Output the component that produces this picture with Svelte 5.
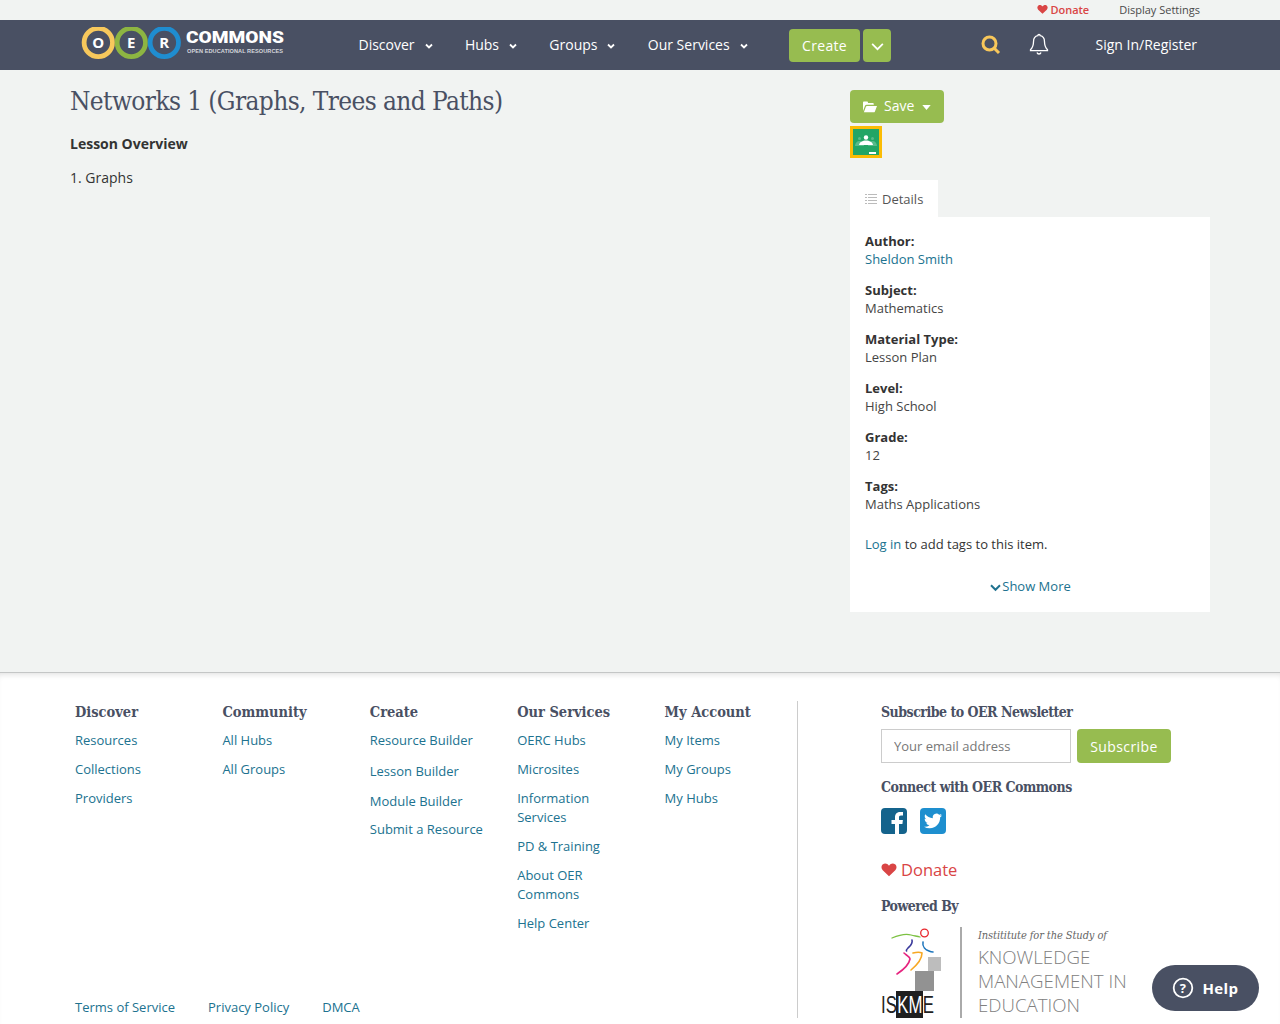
<script>
  const navItems = ['Discover', 'Hubs', 'Groups', 'Our Services'];
  const details = [
    ['Author:', 'Sheldon Smith', true],
    ['Subject:', 'Mathematics', false],
    ['Material Type:', 'Lesson Plan', false],
    ['Level:', 'High School', false],
    ['Grade:', '12', false],
    ['Tags:', 'Maths Applications', false]
  ];
  const columns = [
    { title: 'Discover', links: ['Resources', 'Collections', 'Providers'] },
    { title: 'Community', links: ['All Hubs', 'All Groups'] },
    { title: 'Create', cls: 'create', links: ['Resource Builder', 'Lesson Builder', 'Module Builder', 'Submit a Resource'] },
    { title: 'Our Services', links: ['OERC Hubs', 'Microsites', 'Information Services', 'PD & Training', 'About OER Commons', 'Help Center'] },
    { title: 'My Account', links: ['My Items', 'My Groups', 'My Hubs'] }
  ];
  const heart = 'M12 21.5 2.6 12.3C-.2 9.4.3 5.1 3 3.2c2.900-2 6.800-1 9 2.300 2.200-3.300 6.100-4.300 9-2.300 2.700 1.900 3.200 6.200.4 9.100z';
</script>

<div class="page">
  <div class="topbar">
    <a class="top-donate" href="#d">
      <svg class="heart-s" viewBox="0 0 24 24"><path d={heart} /></svg>Donate
    </a>
    <a class="top-settings" href="#s">Display Settings</a>
  </div>

  <nav class="nav">
    <svg class="logo" viewBox="0 0 210 36" aria-label="OER Commons">
      <g fill="none" stroke-width="4.800">
        <circle cx="17.300" cy="15.500" r="14.200" stroke="#f7c85c" />
        <circle cx="50.300" cy="15.500" r="14.200" stroke="#8db542" />
        <circle cx="83.300" cy="15.500" r="14.200" stroke="#1f8dd0" />
      </g>
      <g class="logo-letter" text-anchor="middle">
        <text x="17.300" y="20.800">O</text>
        <text x="50.300" y="20.800">E</text>
        <text x="83.300" y="20.800">R</text>
      </g>
      <text class="logo-name" x="105" y="15.700" textLength="98" lengthAdjust="spacingAndGlyphs">COMMONS</text>
      <text class="logo-sub" x="106" y="26" textLength="96">OPEN EDUCATIONAL RESOURCES</text>
    </svg>

    <ul class="menu">
      {#each navItems as item}
        <li>
          {item}
          <svg class="caret" viewBox="0 0 10 10"><path d="M2 3.500 5 6.500 8 3.500" /></svg>
        </li>
      {/each}
    </ul>

    <div class="create-group">
      <button class="btn create-btn">Create</button>
      <button class="btn chev-btn" aria-label="More">
        <svg viewBox="0 0 14 14"><path d="M2 4.500 7 9.500 12 4.500" /></svg>
      </button>
    </div>

    <svg class="search" viewBox="0 0 20 20"><circle cx="8.500" cy="8.500" r="6.500" /><path d="M13.500 13.500 18 18" /></svg>
    <svg class="bell" viewBox="0 0 20 22">
      <path d="M10 1.500c.8 0 1.200.5 1.200 1.200 3 .6 4.300 3 4.300 6 0 4 1 6 3 8v1H1.500v-1c2-2 3-4 3-8 0-3 1.300-5.400 4.300-6C8.800 2 9.200 1.500 10 1.500Z" />
      <path d="M8 19.500c.3 1 1 1.500 2 1.500s1.700-.5 2-1.500" />
    </svg>
    <a class="signin" href="#r">Sign In/Register</a>
  </nav>

  <main class="main">
    <article class="content">
      <h1>Networks 1 (Graphs, Trees and Paths)</h1>
      <p class="overview">Lesson Overview</p>
      <p class="body-text">1. Graphs</p>
    </article>

    <aside class="side">
      <button class="btn save">
        <svg class="folder" viewBox="0 0 16 13"><path d="M0 11V1.500C0 .8.500.3 1.200.3h3.300c.7 0 1.200.5 1.200 1.200v.3h5.500c.7 0 1.100.4 1.100 1.100v1H4.200C3.300 4 2.700 4.400 2.300 5.100Z" /><path d="M1 12.500 3.300 6.200c.2-.5.600-.8 1.200-.8H16l-2.500 6.400c-.2.500-.6.700-1.100.7Z" /></svg>
        <span>Save</span>
        <svg class="save-caret" viewBox="0 0 10 6"><path d="M0 0h10L5 6Z" /></svg>
      </button>
      <div class="classroom">
        <svg viewBox="0 0 26 26">
          <rect width="26" height="26" fill="#22a565" />
          <circle cx="6.500" cy="9.500" r="1.500" fill="#57bb8a" />
          <circle cx="19.500" cy="9.500" r="1.500" fill="#57bb8a" />
          <path d="M2 17c0-3 2-5 4.500-5S11 14 11 17ZM15 17c0-3 2-5 4.500-5S24 14 24 17Z" fill="#57bb8a" />
          <circle cx="13" cy="8.500" r="2.200" fill="#fff" />
          <path d="M6 16c.5-3 3.500-4.500 7-4.500S19.500 13 20 16Z" fill="#fff" />
          <rect x="16" y="23" width="7" height="2" fill="#fff" />
        </svg>
      </div>

      <div class="tab">
        <svg class="list" viewBox="0 0 12 10"><path d="M0 .5h2M3 .5h9M0 3.500h2M3 3.500h9M0 6.500h2M3 6.500h9M0 9.500h2M3 9.500h9" /></svg>
        Details
      </div>
      <div class="panel">
        {#each details as [label, value, isLink]}
          <div class="detail">
            <strong>{label}</strong>
            {#if isLink}<a href="#a">{value}</a>{:else}<span>{value}</span>{/if}
          </div>
        {/each}
        <p class="login"><a href="#l">Log in</a> to add tags to this item.</p>
        <a class="more" href="#m">
          <svg viewBox="0 0 14 10"><path d="M2 2.500 7 7.500 12 2.500" /></svg>Show More
        </a>
      </div>
    </aside>
  </main>

  <footer class="footer">
    <div class="foot-left">
      <div class="cols">
        {#each columns as col}
          <div class="col {col.cls ?? ''}">
            <h4>{col.title}</h4>
            {#each col.links as link}
              <a href="#f">{link}</a>
            {/each}
          </div>
        {/each}
      </div>
      <div class="legal">
        <a href="#t">Terms of Service</a>
        <a href="#p">Privacy Policy</a>
        <a href="#c">DMCA</a>
      </div>
    </div>

    <div class="foot-right">
      <h4>Subscribe to OER Newsletter</h4>
      <div class="subscribe">
        <input placeholder="Your email address" />
        <button class="btn sub-btn">Subscribe</button>
      </div>
      <h4>Connect with OER Commons</h4>
      <div class="social">
        <svg viewBox="0 0 26 26">
          <rect width="26" height="26" rx="4" fill="#14638c" />
          <path d="M18 26V16h3.400l.5-4H18V9.500c0-1.100.4-1.900 2-1.900h2V4.100C21.600 4 20.500 4 19.200 4 16.300 4 14 5.800 14 9.100V12h-3.500v4H14v10Z" fill="#fff" />
        </svg>
        <svg viewBox="0 0 26 26">
          <rect width="26" height="26" rx="4" fill="#1e8fcf" />
          <g transform="translate(4 4) scale(.75)">
            <path d="M23.953 4.570a10 10 0 01-2.825.775 4.958 4.958 0 002.163-2.723c-.951.555-2.005.959-3.127 1.184a4.920 4.920 0 00-8.384 4.482C7.690 8.095 4.067 6.130 1.640 3.162a4.822 4.822 0 00-.666 2.475c0 1.710.870 3.213 2.188 4.096a4.904 4.904 0 01-2.228-.616v.060a4.923 4.923 0 003.946 4.827 4.996 4.996 0 01-2.212.085 4.936 4.936 0 004.604 3.417 9.867 9.867 0 01-6.102 2.105c-.390 0-.779-.023-1.170-.067a13.995 13.995 0 007.557 2.209c9.053 0 13.998-7.496 13.998-13.985 0-.210 0-.420-.015-.630A9.935 9.935 0 0024 4.590z" fill="#fff" />
          </g>
        </svg>
      </div>
      <a class="donate" href="#d">
        <svg viewBox="0 0 24 24"><path d={heart} /></svg>Donate
      </a>
      <h4 class="powered">Powered By</h4>
      <div class="iskme">
        <svg class="iskme-mark" viewBox="0 0 62 91">
          <g fill="none" stroke-width="1.300" stroke-linecap="round">
            <path d="M11 11C18 8 24 6 30 8c3 1 6 1 9 2" stroke="#7cc142" />
            <circle cx="43.500" cy="6" r="3.800" stroke="#e8262c" />
            <path d="M31 13c1 4-2 6-4 8-1 1-2 2-1.500 3" stroke="#3a3a9c" stroke-width="1.600" />
            <path d="M42 15c-1 5 3 8 6 9 1 .5 3 1 4 1" stroke="#1c75bc" stroke-width="1.600" />
            <path d="M23 26c2 2 6 4 6 6-1 6-7 11-13 15" stroke="#e6247f" stroke-width="1.600" />
            <path d="M32 26c4-1 7-1 9 0 0 6-5 12-11 17" stroke="#f7a823" stroke-width="1.600" />
          </g>
          <rect x="47" y="30" width="13" height="14" fill="#bdbdbd" />
          <rect x="34" y="44" width="19" height="20" fill="#929292" />
          <rect x="15" y="64" width="27" height="27" fill="#1f1f1f" />
          <g transform="translate(0 86) scale(1 1.420)">
            <text class="isk" x="0" y="0" fill="#222">IS</text>
            <text class="isk" x="16.200" y="0" fill="#fff">KM</text>
            <text class="isk" x="41.800" y="0" fill="#222">E</text>
          </g>
        </svg>
        <div class="iskme-rule"></div>
        <div class="iskme-text">
          <em>Instititute for the Study of</em>
          <span>KNOWLEDGE</span>
          <span>MANAGEMENT IN</span>
          <span>EDUCATION</span>
        </div>
      </div>
    </div>
  </footer>

  <button class="help">
    <svg viewBox="0 0 22 22"><circle cx="11" cy="11" r="9.300" /><text x="11" y="15.500" text-anchor="middle">?</text></svg>
    Help
  </button>
</div>

<style>
  :global(body) {
    margin: 0;
    background: #f1f3f2;
    font-family: "Open Sans", sans-serif;
    color: #333;
  }
  a { color: #20728f; text-decoration: none; }
  h1, h4, p { margin: 0; }
  button { font-family: inherit; border: 0; cursor: pointer; }

  .page { position: relative; height: 1024px; overflow: hidden; }

  .topbar {
    height: 20px;
    display: flex;
    align-items: center;
    justify-content: flex-end;
    padding: 0 80px 2px 0;
    box-sizing: border-box;
    font-size: 11px;
  }
  .top-donate { color: #d94545; font-weight: 600; display: flex; align-items: center; gap: 2px; margin-right: 30px; }
  .heart-s { width: 11px; height: 11px; fill: #d94545; }
  .top-settings { color: #4a4a4a; }

  .nav {
    height: 50px;
    background: #495063;
    display: flex;
    align-items: center;
    color: #fff;
    font-size: 14px;
  }
  .logo { width: 210px; height: 36px; margin-left: 81px; flex: none; }
  .logo-letter { font: 700 15px "Open Sans", sans-serif; fill: #fff; }
  .logo-name { font: 900 17px Roboto, sans-serif; fill: #fff; }
  .logo-sub { font: 700 5.600px "Liberation Sans", sans-serif; fill: #d5d7dc; }

  .menu { list-style: none; display: flex; margin: -2px 0 0 67.500px; padding: 0; width: 430.500px; flex: none; }
  .menu li { display: flex; align-items: center; margin-right: 31.300px; white-space: nowrap; }
  .caret { width: 10px; height: 10px; margin-left: 9px; margin-top: 3px; }
  .caret path { fill: none; stroke: #fff; stroke-width: 1.800; }

  .create-group { display: flex; gap: 3px; flex: none; width: 192px; }
  .btn { background: #97bc50; color: #fff; border-radius: 4px; }
  .create-btn { width: 71px; height: 33px; font-size: 14px; padding: 0; letter-spacing: .3px; }
  .chev-btn { width: 28px; height: 33px; padding: 0; display: flex; align-items: center; justify-content: center; }
  .chev-btn svg { width: 15px; height: 15px; margin-top: 3px; }
  .chev-btn path { fill: none; stroke: #fff; stroke-width: 1.600; }

  .search { width: 20px; height: 20px; flex: none; margin-right: 28px; }
  .search circle, .search path { fill: none; stroke: #f8c75a; stroke-width: 3; }
  .bell { width: 20px; height: 22px; flex: none; margin-right: 46.500px; margin-top: -2px; }
  .bell path { fill: none; stroke: #fff; stroke-width: 1.300; }
  .signin { color: #fff; font-size: 14px; margin-top: -2px; }

  .main { height: 602px; display: flex; box-sizing: border-box; padding-left: 70px; }
  .content { width: 780px; flex: none; }
  h1 {
    font-family: "DejaVu Serif Condensed", "DejaVu Serif", serif;
    font-weight: 400;
    font-size: 26px;
    line-height: 32px;
    letter-spacing: -.6px;
    color: #495063;
    margin-top: 15px;
  }
  .overview { font-weight: 700; font-size: 14px; line-height: 20px; margin-top: 17px; }
  .body-text { font-size: 14px; line-height: 20px; margin-top: 14px; }

  .side { width: 360px; flex: none; padding-top: 20px; }
  .save {
    display: flex; align-items: center;
    width: 94px; height: 33px; padding: 0 0 0 13px;
    font-size: 14px; box-sizing: border-box;
  }
  .save span { margin-top: -2px; }
  .folder { width: 14px; height: 12px; fill: #fff; margin-right: 7px; }
  .save-caret { width: 9px; height: 5px; fill: #fff; margin-left: 8px; margin-top: 1px; }
  .classroom { width: 32px; height: 32px; margin-top: 3px; box-sizing: border-box; border: 3px solid #fbbc05; }
  .classroom svg { display: block; width: 26px; height: 26px; }

  .tab {
    display: flex; align-items: center;
    width: 88px; height: 37px;
    margin-top: 22px;
    background: #fff;
    box-sizing: border-box;
    padding-left: 15px;
    font-size: 13px;
    color: #555;
  }
  .list { width: 12px; height: 10px; margin-right: 5px; }
  .list path { stroke: #bbb; stroke-width: 1; fill: none; }

  .panel { background: #fff; height: 395px; box-sizing: border-box; padding: 15px 15px 0; font-size: 13px; line-height: 18px; }
  .detail { display: flex; flex-direction: column; margin-bottom: 13px; color: #444; }
  .detail strong { color: #333; font-weight: 700; }
  .login { margin-top: 22px; color: #333; }
  .more { display: flex; align-items: center; justify-content: center; margin-top: 24px; }
  .more svg { width: 13px; height: 9px; margin-top: 2px; }
  .more path { fill: none; stroke: #20728f; stroke-width: 2.200; }

  .footer {
    height: 352px;
    background: #fff;
    border-top: 1px solid #c4c6c6;
    box-shadow: inset 0 5px 6px -4px rgba(0, 0, 0, .14);
    position: relative;
    display: flex;
    box-sizing: border-box;
    padding: 28px 0 6px 75px;
  }
  .foot-left {
    width: 723px; flex: none; box-sizing: border-box;
    border-right: 1px solid #ccc;
    display: flex; flex-direction: column; justify-content: space-between;
  }
  .cols { display: flex; padding-top: 1px; }
  .col { width: 147.400px; flex: none; display: flex; flex-direction: column; font-size: 13px; line-height: 19px; padding-right: 30px; box-sizing: border-box; }
  .col a { margin-bottom: 10px; }
  .col.create a:nth-of-type(1) { margin-bottom: 12px; }
  .col.create a:nth-of-type(2) { margin-bottom: 11px; }
  .col.create a:nth-of-type(3) { margin-bottom: 9px; }
  h4 {
    font-family: "DejaVu Serif Condensed", "DejaVu Serif", serif;
    font-weight: 700;
    font-size: 14px;
    line-height: 20px;
    letter-spacing: -.5px;
    color: #495063;
  }
  .col h4 { font-size: 14.500px; letter-spacing: 0; margin-bottom: 9px; white-space: nowrap; }
  .legal { display: flex; gap: 33px; font-size: 13px; line-height: 19px; padding-bottom: 1px; }

  .foot-right { padding-left: 83px; padding-top: 1px; }
  .subscribe { display: flex; gap: 6px; margin-top: 7px; margin-bottom: 14px; }
  input {
    width: 190px; height: 34px; box-sizing: border-box;
    border: 1px solid #ccc; padding: 0 12px;
    font: 13px "Open Sans", sans-serif; background: #fff;
  }
  input::placeholder { color: #777; opacity: 1; }
  .sub-btn { width: 94px; height: 34px; font-size: 14px; padding: 0; letter-spacing: .4px; }
  .social { display: flex; gap: 13px; margin-top: 11px; }
  .social svg { width: 26px; height: 26px; display: block; }
  .donate { display: flex; align-items: center; gap: 4px; margin-top: 24px; color: #d94545; font-size: 16.500px; line-height: 24px; }
  .donate svg { width: 16px; height: 16px; fill: #d94545; }
  .powered { margin-top: 14px; }
  .iskme { display: flex; margin-top: 11px; height: 91px; }
  .iskme-mark { width: 62px; height: 91px; flex: none; }
  .isk { font: 400 16.800px "Liberation Sans", sans-serif; }
  .iskme-rule { width: 2px; height: 91px; background: #aaa; margin-left: 17px; margin-right: 16px; }
  .iskme-text { display: flex; flex-direction: column; color: #808080; white-space: nowrap; }
  .iskme-text em { font: italic 11px/16px "DejaVu Serif Condensed", "DejaVu Serif", serif; letter-spacing: -.1px; color: #666; margin-top: 1px; margin-bottom: 1px; }
  .iskme-text span { font-size: 18.700px; line-height: 24px; font-weight: 300; }

  .help {
    position: absolute; left: 1152px; top: 965px;
    width: 107px; height: 46px; border-radius: 23px;
    background: #495063; color: #fff;
    display: flex; align-items: center; justify-content: center; gap: 8px;
    font-size: 15px; font-weight: 700; letter-spacing: .4px;
  }
  .help svg { width: 22px; height: 22px; }
  .help circle { fill: none; stroke: #fff; stroke-width: 1.800; }
  .help text { fill: #fff; font: 700 13px "Open Sans", sans-serif; }
</style>
